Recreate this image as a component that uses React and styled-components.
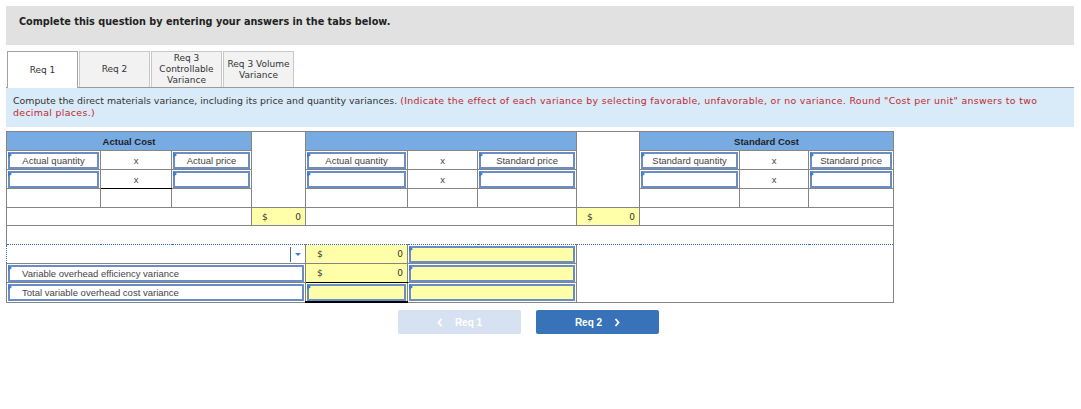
import React from 'react';
import styled, { createGlobalStyle, css } from 'styled-components';

const GlobalStyle = createGlobalStyle`
  body {
    margin: 0;
    background: #fff;
  }
`;

const Page = styled.div`
  width: 1068px;
  padding: 6px;
  font-family: "DejaVu Sans", Verdana, sans-serif;
`;

const Banner = styled.div`
  box-sizing: border-box;
  height: 39px;
  background: #e1e1e1;
  padding: 10px 0 0 13px;
  font-size: 9.7px;
  line-height: 12px;
  font-weight: bold;
  color: #222;
`;

const TabBar = styled.div`
  margin-top: 6px;
  display: flex;
  gap: 1px;
  padding-left: 1px;
  border-bottom: 1px solid #9a9a9a;
`;

const Tab = styled.div`
  box-sizing: border-box;
  width: 71px;
  height: 36px;
  display: flex;
  align-items: center;
  justify-content: center;
  text-align: center;
  font-size: 9px;
  line-height: 11px;
  color: #333;
  background: #f2f2f2;
  border: 1px solid #c8c8c8;
  border-bottom: none;
  ${p => p.$active && css`
    background: #fff;
    border: 1px solid #a2a2a2;
    border-bottom: none;
    height: 37px;
    margin-bottom: -1px;
  `}
`;

const Instruction = styled.div`
  box-sizing: border-box;
  height: 39px;
  background: #d9ebf9;
  padding: 7px 7px 0;
  font-size: 9.4px;
  line-height: 12px;
  color: #333;
`;

const Note = styled.span`
  color: #c1272d;
  letter-spacing: 0.33px;
`;

const Grid = styled.table`
  border-collapse: collapse;
  table-layout: fixed;
  width: 887px;
  margin-top: 4px;
  font-family: "Liberation Sans", Arial, sans-serif;
  font-size: 9.5px;
  color: #444;
`;

const Row = styled.tr`
  ${p => p.$short && css`
    & > td {
      height: 17px;
    }
  `}
`;

const Cell = styled.td`
  border: 1px solid #858585;
  height: 18px;
  padding: 0;
  text-align: center;
  vertical-align: middle;
  background: ${p => (p.$tone === 'blue' ? '#77abe2' : p.$tone === 'yellow' ? '#ffffaa' : '#fff')};
  ${p => p.$head && css`
    font-weight: bold;
    color: #1f1f1f;
  `}
  ${p => p.$slot && css`padding: 0 1px;`}
  ${p => p.$underline && css`border-bottom: 1px solid #000;`}
  ${p => p.$heavy && css`border-bottom: 2px solid #000;`}
  ${p => p.$open && css`border-bottom: none;`}
  ${p => p.$dottedTop && css`border-top: 1px dotted #3d6ea8;`}
  ${p => p.$dotted && css`border: 1px dotted #3d6ea8;`}
`;

const Field = styled.div`
  position: relative;
  box-sizing: border-box;
  height: 17px;
  border: 2px solid #6b8dc5;
  background: ${p => (p.$yellow ? '#ffffaa' : '#fff')};
  display: flex;
  align-items: center;
  justify-content: ${p => (p.$left ? 'flex-start' : 'center')};
  padding-left: ${p => (p.$left ? '12px' : '0')};
  &::before {
    content: '';
    position: absolute;
    top: -2px;
    left: -2px;
    border-left: 4px solid #3a7fd6;
    border-top: 3px solid transparent;
    border-bottom: 3px solid transparent;
  }
`;

const Money = styled.div`
  display: flex;
  justify-content: space-between;
  padding: 0 4px 0 ${p => p.$indent || 10}px;
  font-family: "DejaVu Sans", Verdana, sans-serif;
  font-size: 9px;
  color: #333;
`;

const Select = styled.div`
  height: 15px;
  display: flex;
  justify-content: flex-end;
`;

const SelectArrow = styled.div`
  width: 14px;
  border-left: 1px solid #3b6cae;
  display: flex;
  align-items: center;
  justify-content: center;
  &::after {
    content: '';
    border-top: 3px solid #3a7bd5;
    border-left: 3px solid transparent;
    border-right: 3px solid transparent;
  }
`;

const Nav = styled.div`
  display: flex;
  gap: 15px;
  margin-top: 7px;
  padding-left: 392px;
`;

const NavButton = styled.button`
  width: 123px;
  height: 24px;
  border: none;
  border-radius: 2px;
  background: ${p => (p.disabled ? '#d6e2f1' : '#3873ba')};
  color: #fff;
  font-family: "Liberation Sans", Arial, sans-serif;
  font-size: 10px;
  font-weight: bold;
  display: flex;
  align-items: center;
  justify-content: center;
  gap: 12px;
  padding: 0;
`;

const Chevron = ({ dir }) => (
  <svg width="6" height="9" viewBox="0 0 6 9">
    <polyline
      points={dir === 'left' ? '4.5,1 1.5,4.5 4.5,8' : '1.5,1 4.5,4.5 1.5,8'}
      fill="none"
      stroke="#fff"
      strokeWidth="1.8"
    />
  </svg>
);

const widths = [94, 71, 80, 54, 102, 70, 99, 63, 100, 69, 85];

const groups = [
  { head: 'Actual Cost', left: 'Actual quantity', right: 'Actual price', line: true },
  { head: '', left: 'Actual quantity', right: 'Standard price' },
  { head: 'Standard Cost', left: 'Standard quantity', right: 'Standard price' },
];

const Dollar = ({ indent }) => (
  <Money $indent={indent}>
    <span>$</span>
    <span>0</span>
  </Money>
);

export default function App() {
  return (
    <>
      <GlobalStyle />
      <Page>
        <Banner>Complete this question by entering your answers in the tabs below.</Banner>
        <TabBar>
          <Tab $active>Req 1</Tab>
          <Tab>Req 2</Tab>
          <Tab>Req 3<br />Controllable<br />Variance</Tab>
          <Tab>Req 3 Volume<br />Variance</Tab>
        </TabBar>
        <Instruction>
          Compute the direct materials variance, including its price and quantity variances.{' '}
          <Note>
            (Indicate the effect of each variance by selecting favorable, unfavorable, or no variance. Round "Cost per unit" answers to two
            <br />
            decimal places.)
          </Note>
        </Instruction>

        <Grid>
          <colgroup>
            {widths.map((w, i) => (
              <col key={i} style={{ width: w }} />
            ))}
          </colgroup>
          <tbody>
            <Row>
              <Cell colSpan={3} $tone="blue" $head>{groups[0].head}</Cell>
              <Cell rowSpan={4} />
              <Cell colSpan={3} $tone="blue" $head>{groups[1].head}</Cell>
              <Cell rowSpan={4} />
              <Cell colSpan={3} $tone="blue" $head>{groups[2].head}</Cell>
            </Row>
            <Row>
              {groups.map(g => (
                <React.Fragment key={g.left + g.right}>
                  <Cell $slot><Field>{g.left}</Field></Cell>
                  <Cell>x</Cell>
                  <Cell $slot><Field>{g.right}</Field></Cell>
                </React.Fragment>
              ))}
            </Row>
            <Row>
              {groups.map(g => (
                <React.Fragment key={g.left + g.right}>
                  <Cell $slot><Field /></Cell>
                  <Cell $underline={g.line}>x</Cell>
                  <Cell $slot><Field /></Cell>
                </React.Fragment>
              ))}
            </Row>
            <Row>
              {Array.from({ length: 9 }).map((_, i) => (
                <Cell key={i} />
              ))}
            </Row>
            <Row $short>
              <Cell colSpan={3} />
              <Cell $tone="yellow"><Dollar /></Cell>
              <Cell colSpan={3} />
              <Cell $tone="yellow"><Dollar /></Cell>
              <Cell colSpan={3} />
            </Row>
            <Row>
              <Cell colSpan={11} $open />
            </Row>
            <Row>
              <Cell colSpan={4} $dotted>
                <Select>
                  <SelectArrow />
                </Select>
              </Cell>
              <Cell $tone="yellow" $dottedTop><Dollar indent={11} /></Cell>
              <Cell colSpan={2} $slot $dottedTop><Field $yellow /></Cell>
              <Cell colSpan={4} rowSpan={3} $dottedTop />
            </Row>
            <Row>
              <Cell colSpan={4} $slot><Field $left>Variable overhead efficiency variance</Field></Cell>
              <Cell $tone="yellow" $underline><Dollar indent={11} /></Cell>
              <Cell colSpan={2} $slot><Field $yellow /></Cell>
            </Row>
            <Row>
              <Cell colSpan={4} $slot><Field $left>Total variable overhead cost variance</Field></Cell>
              <Cell $slot $tone="yellow" $heavy><Field $yellow /></Cell>
              <Cell colSpan={2} $slot><Field $yellow /></Cell>
            </Row>
          </tbody>
        </Grid>

        <Nav>
          <NavButton disabled>
            <Chevron dir="left" />
            Req 1
          </NavButton>
          <NavButton>
            Req 2
            <Chevron dir="right" />
          </NavButton>
        </Nav>
      </Page>
    </>
  );
}
